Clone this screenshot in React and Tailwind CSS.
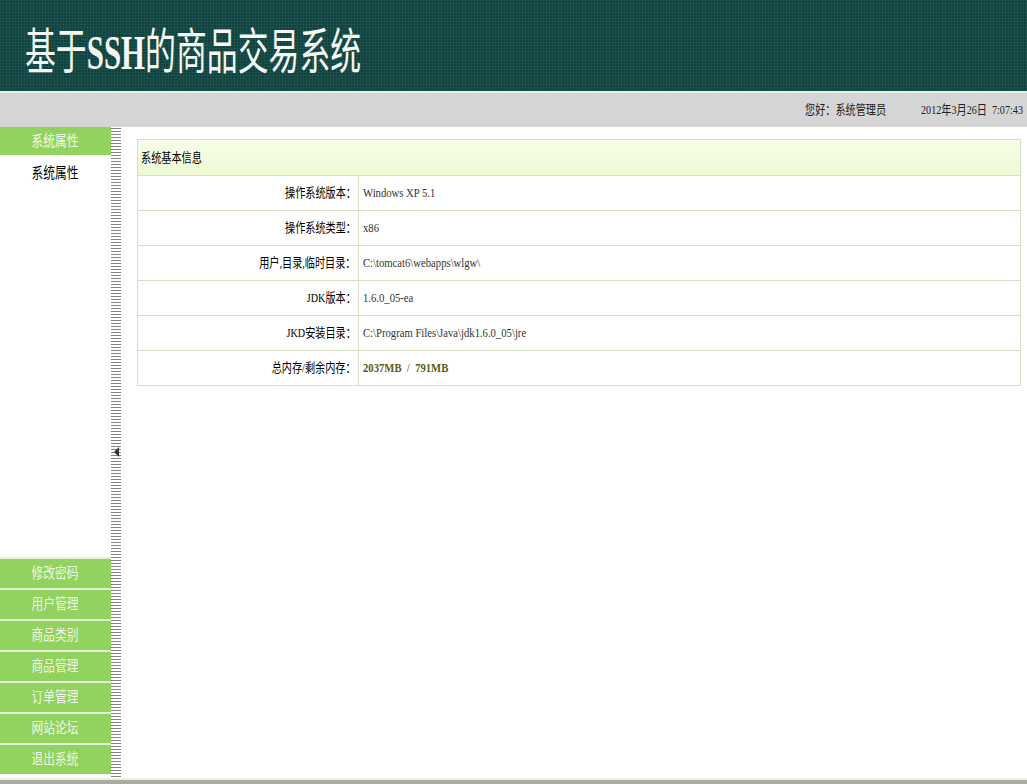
import React from 'react'

const CJK = "font-['Liberation_Serif','Noto_Sans_CJK_SC',serif]"

const rows = [
  ['操作系统版本：', 'Windows XP  5.1'],
  ['操作系统类型：', 'x86'],
  ['用户,目录,临时目录：', 'C:\\tomcat6\\webapps\\wlgw\\'],
  ['JDK版本：', '1.6.0_05-ea'],
  ['JKD安装目录：', 'C:\\Program Files\\Java\\jdk1.6.0_05\\jre'],
]

const menu = [
  '修改密码',
  '用户管理',
  '商品类别',
  '商品管理',
  '订单管理',
  '网站论坛',
  '退出系统',
]

function Narrow({ children, origin = 'origin-left', className = '' }) {
  return (
    <span className={`inline-block whitespace-nowrap scale-x-[0.78] ${origin} ${className}`}>
      {children}
    </span>
  )
}

export default function App() {
  return (
    <div className={`flex h-[784px] w-[1027px] flex-col overflow-hidden bg-white ${CJK}`}>
      {/* header */}
      <div className="flex h-[91px] items-center bg-[#0e433f] bg-[linear-gradient(rgba(255,255,255,0.05)_1px,transparent_1px),linear-gradient(90deg,rgba(255,255,255,0.05)_1px,transparent_1px)] bg-[size:3px_3px] pl-[25px]">
        <h1 className="mt-[14px] inline-block origin-left scale-x-[0.63] whitespace-nowrap text-[49px] leading-none text-[#f4f7f2]">
          基于<span className="font-bold">SSH</span>的商品交易系统
        </h1>
      </div>
      <div className="h-[2px] bg-[#e6ece9]" />

      {/* top bar */}
      <div className="flex h-[34px] items-center justify-end bg-[#d5d5d5] pr-[6px] text-[13px] text-[#222]">
        <div className="w-[116px]">
          <Narrow>您好：系统管理员</Narrow>
        </div>
        <div className="w-[100px]">
          <Narrow className="scale-x-[0.72]">2012年3月26日&nbsp;&nbsp;7:07:43</Narrow>
        </div>
      </div>

      {/* body */}
      <div className="flex flex-1">
        <aside className="flex w-[111px] flex-col">
          <div className="flex h-[28px] items-center justify-center bg-[#92d25e] text-[15px] text-[#f2f9ec]">
            <Narrow origin="origin-center" className="scale-x-[0.8]">系统属性</Narrow>
          </div>
          <div className="flex h-[36px] items-center justify-center text-[15px] text-black">
            <Narrow origin="origin-center" className="scale-x-[0.8]">系统属性</Narrow>
          </div>
          <div className="flex-1" />
          {menu.map((item) => (
            <div
              key={item}
              className="flex h-[31px] items-center justify-center border-t-2 border-[#e4f1d8] bg-[#92d25e] text-[15px] text-[#eef8e6]"
            >
              <Narrow origin="origin-center" className="scale-x-[0.8]">{item}</Narrow>
            </div>
          ))}
          <div className="h-[4px]" />
        </aside>

        <div className="relative w-[10px] bg-[radial-gradient(circle,#777_0.6px,transparent_0.9px)] bg-[size:2px_3px] opacity-90">
          <div className="absolute left-[3px] top-[320px] h-0 w-0 border-y-[5px] border-r-[5px] border-y-transparent border-r-[#2a1a10]" />
        </div>

        <main className="flex-1 pl-[16px] pr-[6px] pt-[12px]">
          <table className="w-full border-collapse border border-[#d9dfc4] text-[13px]">
            <tbody>
              <tr className="h-[36px] bg-[linear-gradient(180deg,#f7fde9,#edf9d2)]">
                <td colSpan={2} className="border border-[#d9dfc4] px-[3px] text-black">
                  <Narrow>系统基本信息</Narrow>
                </td>
              </tr>
              {rows.map(([label, value]) => (
                <tr key={label} className="h-[35px]">
                  <td className="w-[221px] border border-[#d9dfc4] pr-[2px] text-right text-black">
                    <Narrow origin="origin-right">{label}</Narrow>
                  </td>
                  <td className="border border-[#d9dfc4] pl-[4px] text-[#333]">
                    <Narrow className="scale-x-[0.82]">{value}</Narrow>
                  </td>
                </tr>
              ))}
              <tr className="h-[35px]">
                <td className="w-[221px] border border-[#d9dfc4] pr-[2px] text-right text-black">
                  <Narrow origin="origin-right">总内存/剩余内存：</Narrow>
                </td>
                <td className="border border-[#d9dfc4] pl-[4px] text-[#333]">
                  <Narrow className="scale-x-[0.82]">
                    <span className="font-bold text-[#5c5a12]">2037MB</span>
                    {' \u00a0/\u00a0 '}
                    <span className="font-bold text-[#5c5a12]">791MB</span>
                  </Narrow>
                </td>
              </tr>
            </tbody>
          </table>
        </main>
      </div>

      {/* bottom line */}
      <div className="h-[6px] border-t-2 border-[#eceee8] bg-[#a9aaa4]" />
    </div>
  )
}
